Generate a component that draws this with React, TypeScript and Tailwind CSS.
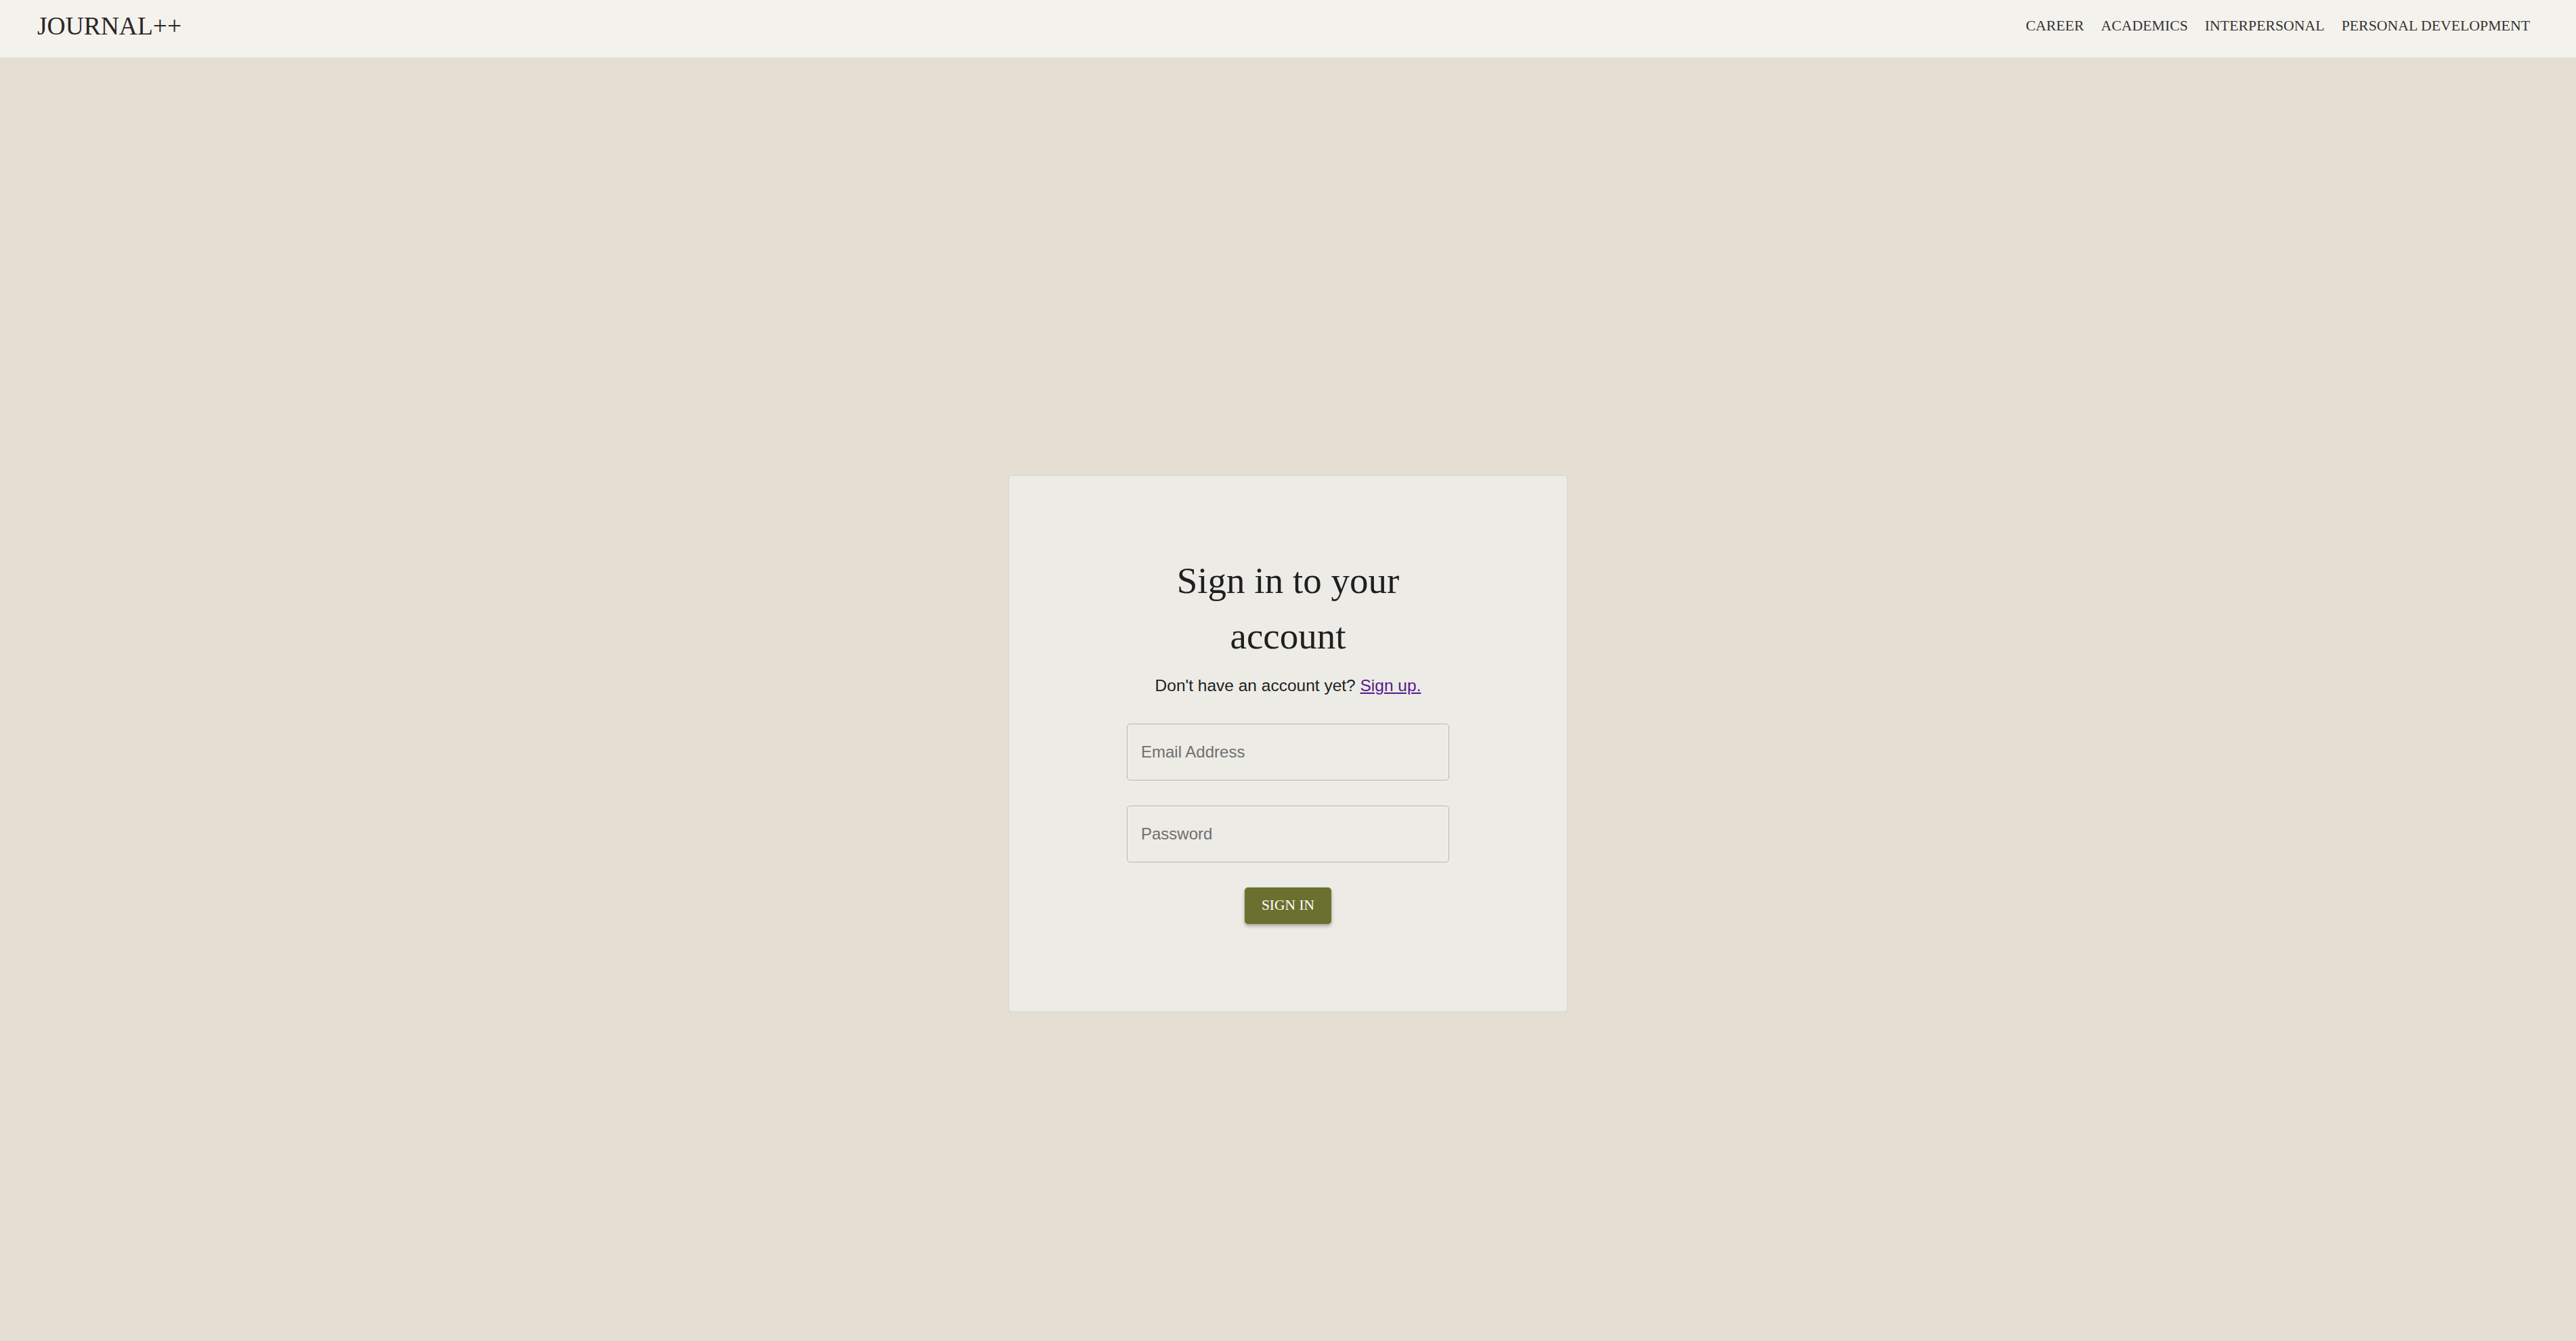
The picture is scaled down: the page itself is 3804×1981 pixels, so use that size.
import React from 'react';

const navItems = ['CAREER', 'ACADEMICS', 'INTERPERSONAL', 'PERSONAL DEVELOPMENT'];

export default function App() {
  return (
    <div className="min-h-screen bg-[#e5ded2] text-[#1f1f1f]">
      <header className="h-[86px] bg-[#f4f2ed] border-b border-[#e0dbd2] flex items-start justify-between pl-[55px] pr-[68px] font-['Liberation_Serif',serif]">
        <a href="#" className="mt-[18px] text-[37.5px] leading-[41px] text-[#2b2623]">
          JOURNAL++
        </a>
        <nav className="mt-[26px] flex gap-[25px] text-[21.8px] leading-[24px] text-[#333]">
          {navItems.map((item) => (
            <a key={item} href="#" className="hover:underline">
              {item}
            </a>
          ))}
        </nav>
      </header>

      <main className="flex justify-center pt-[616px] pb-[200px]">
        <div className="w-[826px] bg-[#ecebe6] border border-[#d9d6d0] rounded-[5px] pt-[114px] pb-[129px] flex flex-col items-center">
          <h1 className="w-[476px] text-center font-['Liberation_Serif',serif] text-[55px] leading-[82px] text-[#1f1f1f]">
            Sign in to your account
          </h1>
          <p className="mt-[14px] font-['Liberation_Sans',Arial,sans-serif] text-[24.5px] leading-[36px] text-[#1f1f1f]">
            Don't have an account yet?{' '}
            <a href="#" className="text-[#551a8b] underline">
              Sign up.
            </a>
          </p>
          <form className="mt-[38px] flex flex-col items-center gap-[37px]">
            <input
              type="email"
              placeholder="Email Address"
              className="w-[476px] h-[84px] px-[20px] bg-transparent border border-[#b8b6b1] rounded-[5px] font-['Liberation_Sans',Arial,sans-serif] text-[24px] text-[#333] placeholder:text-[#6f6f6f] outline-none"
            />
            <input
              type="password"
              placeholder="Password"
              className="w-[476px] h-[84px] px-[20px] bg-transparent border border-[#b8b6b1] rounded-[5px] font-['Liberation_Sans',Arial,sans-serif] text-[24px] text-[#333] placeholder:text-[#6f6f6f] outline-none"
            />
            <button
              type="submit"
              className="w-[128px] h-[54px] bg-[#6c702f] text-white rounded-[5px] shadow-[0_3px_5px_rgba(0,0,0,0.3)] font-['Liberation_Serif',serif] text-[21.5px] leading-none"
            >
              SIGN IN
            </button>
          </form>
        </div>
      </main>
    </div>
  );
}
